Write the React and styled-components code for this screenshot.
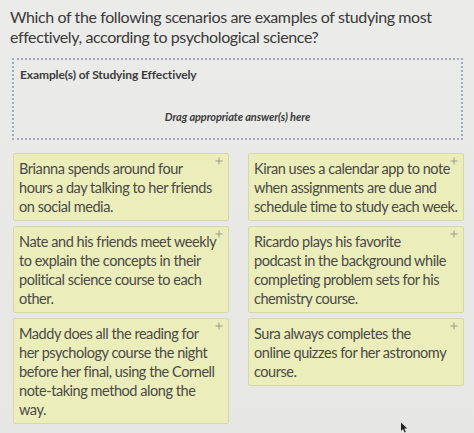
import React from "react";
import styled, { createGlobalStyle } from "styled-components";

const GlobalStyle = createGlobalStyle`
  html, body {
    margin: 0;
    padding: 0;
    background: #e8e8e6;
  }
  body {
    font-family: "Lato", "Liberation Sans", sans-serif;
    color: #3f3f3d;
  }
`;

// lines kept as in the screenshot so the wraps match
const answers = [
  ["Brianna spends around four", "hours a day talking to her friends", "on social media."],
  ["Kiran uses a calendar app to note", "when assignments are due and", "schedule time to study each week."],
  ["Nate and his friends meet weekly", "to explain the concepts in their", "political science course to each", "other."],
  ["Ricardo plays his favorite", "podcast in the background while", "completing problem sets for his", "chemistry course."],
  [
    "Maddy does all the reading for",
    "her psychology course the night",
    "before her final, using the Cornell",
    "note-taking method along the",
    "way.",
  ],
  ["Sura always completes the", "online quizzes for her astronomy", "course."],
];

const MoveIcon = () => (
  <svg width="8" height="8" viewBox="0 0 8 8">
    <path d="M4 0.5V7.5M0.5 4H7.5" stroke="#9a9a88" strokeWidth="1" fill="none" />
  </svg>
);

const Cursor = () => (
  <svg width="8" height="11" viewBox="0 0 8 11">
    <path d="M1 0.5L1 9L3 7L4.6 10.5L5.8 10L4.3 6.6L7.2 6.6Z" fill="#222" />
  </svg>
);

const App = () => (
  <>
    <GlobalStyle />
    <Page>
      <Question>
        Which of the following scenarios are examples of studying most
        effectively, according to psychological science?
      </Question>
      <DropZone>
        <ZoneTitle>Example(s) of Studying Effectively</ZoneTitle>
        <ZoneHint>Drag appropriate answer(s) here</ZoneHint>
      </DropZone>
      <Grid>
        {answers.map((lines) => (
          <Card key={lines[0]}>
            {lines.map((l) => (
              <Line key={l}>{l}</Line>
            ))}
            <Handle>
              <MoveIcon />
            </Handle>
          </Card>
        ))}
      </Grid>
      <Pointer>
        <Cursor />
      </Pointer>
    </Page>
  </>
);

export default App;

const Page = styled.div`
  position: relative;
  width: 474px;
  height: 433px;
  box-sizing: border-box;
  padding: 7px 11px 0 10px;
  overflow: hidden;
  background: linear-gradient(180deg, #ebebea 0%, #e6e6e4 100%);
`;

const Question = styled.div`
  font-size: 16px;
  line-height: 20px;
  letter-spacing: -0.4px;
  color: #3a3a39;
`;

const DropZone = styled.div`
  margin: 11px 0 0 2px;
  height: 82px;
  box-sizing: border-box;
  border: 2px dotted #a3abc2;
  padding: 7px 6px;
  display: flex;
  flex-direction: column;
`;

const ZoneTitle = styled.div`
  font-size: 12px;
  font-weight: 700;
  letter-spacing: -0.1px;
  color: #3c3c3b;
`;

const ZoneHint = styled.div`
  margin-top: auto;
  margin-bottom: 8px;
  text-align: center;
  font-size: 11px;
  font-weight: 700;
  font-style: italic;
  letter-spacing: -0.1px;
  color: #3c3c3b;
`;

const Grid = styled.div`
  display: grid;
  grid-template-columns: 216px 216px;
  column-gap: 19px;
  row-gap: 5px;
  align-items: start;
  margin: 13px 0 0 3px;
`;

const Card = styled.div`
  position: relative;
  background: #ebedba;
  border: 1px solid #d6d8a6;
  border-radius: 2px;
  padding: 5px 6px 4px 5px;
  font-size: 14.5px;
  line-height: 19px;
  letter-spacing: -0.45px;
  color: #4a4a47;
`;

const Line = styled.div`
  white-space: nowrap;
`;

const Handle = styled.span`
  position: absolute;
  top: 3px;
  right: 5px;
  line-height: 0;
`;

const Pointer = styled.div`
  position: absolute;
  left: 400px;
  top: 417px;
`;
